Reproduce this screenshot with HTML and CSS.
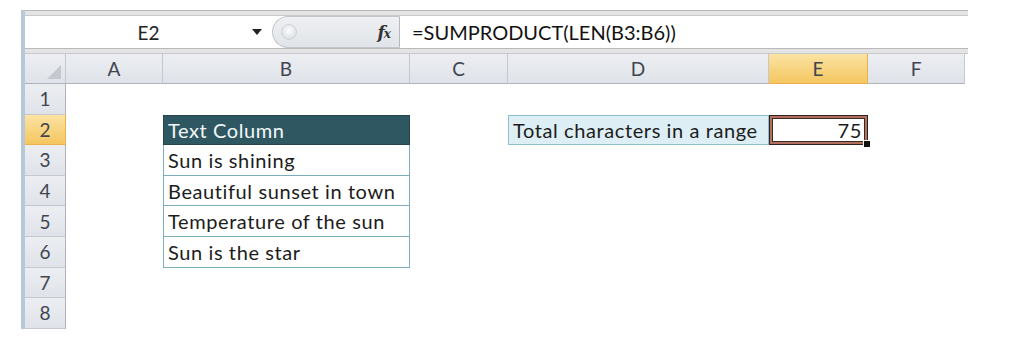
FILE: index.html
```html
<!DOCTYPE html>
<html lang="en">
<head>
    <meta charset="UTF-8">
    <title>SUMPRODUCT LEN example</title>
    <link rel="stylesheet" href="styles.css">
</head>
<body>

    <div class="sheet">
        <div class="bar-edge"></div>

        <div class="formula-bar">
            <div class="name-box">
                <span class="name">E2</span>
                <span class="drop"></span>
            </div>
            <div class="grip">
                <span class="knob"></span>
                <span class="fx"><i>f</i><sub>x</sub></span>
            </div>
            <div class="formula">=SUMPRODUCT(LEN(B3:B6))</div>
        </div>

        <div class="bar-edge"></div>

        <div class="grid">
            <div class="hd corner"></div>
            <div class="hd col">A</div>
            <div class="hd col">B</div>
            <div class="hd col">C</div>
            <div class="hd col">D</div>
            <div class="hd col active">E</div>
            <div class="hd col">F</div>

            <div class="hd row">1</div>

            <div class="hd row active">2</div>
            <div class="cell colB tbl tbl-head">Text Column</div>
            <div class="cell colD label">Total characters in a range</div>
            <div class="cell colE selected">75<span class="handle"></span></div>

            <div class="hd row">3</div>
            <div class="cell colB tbl">Sun is shining</div>

            <div class="hd row">4</div>
            <div class="cell colB tbl">Beautiful sunset in town</div>

            <div class="hd row">5</div>
            <div class="cell colB tbl">Temperature of the sun</div>

            <div class="hd row">6</div>
            <div class="cell colB tbl">Sun is the star</div>

            <div class="hd row">7</div>
            <div class="hd row">8</div>
        </div>
    </div>

</body>
</html>
```

FILE: styles.css
```css
body {
    margin: 0;
    background: #ffffff;
    font-family: 'Lato', 'Open Sans', sans-serif;
}

.sheet {
    width: 943px;
    margin: 10px 0 0 21px;
    border-left: 4px solid #b9c8d9;
}

/* thin grey strips above and below the formula bar */
.bar-edge {
    height: 4px;
    background: #e4e4e4;
    border-top: 1px solid #b9b9b9;
    border-bottom: 1px solid #c9c9c9;
}

.formula-bar {
    display: flex;
    height: 32px;
    background: #ffffff;
}

.name-box {
    width: 247px;
    display: flex;
    align-items: center;
}

.name {
    flex-grow: 1;
    text-align: center;
    font-size: 19px;
    color: #222;
    padding-left: 20px;
}

.drop {
    width: 0;
    height: 0;
    border-left: 5px solid transparent;
    border-right: 5px solid transparent;
    border-top: 6px solid #222;
    margin-right: 10px;
}

.grip {
    width: 128px;
    display: flex;
    align-items: center;
    justify-content: space-between;
    background: linear-gradient(#eef0f3, #e1e4e8);
    border: 1px solid #c3c7cd;
    border-right: 1px solid #b5b9bf;
    border-radius: 16px 0 0 16px;
    box-sizing: border-box;
    padding: 0 8px 0 8px;
}

.knob {
    width: 14px;
    height: 14px;
    border-radius: 50%;
    background: radial-gradient(circle at 50% 40%, #ffffff, #d0d4da);
    border: 1px solid #cfd3d8;
}

.fx {
    font-family: 'DejaVu Serif', serif;
    font-style: italic;
    font-weight: bold;
    font-size: 16px;
    color: #333;
}

.fx i {
    font-size: 17px;
}

.fx sub {
    font-size: 12px;
    vertical-align: 0;
    margin-left: -1px;
}

.formula {
    flex-grow: 1;
    display: flex;
    align-items: center;
    padding-left: 12px;
    font-size: 20px;
    color: #111;
}

/* spreadsheet grid */
.grid {
    display: grid;
    grid-template-columns: 41px 97px 247px 98px 261px 99px 97px;
    grid-template-rows: 30px repeat(8, 30.6px);
    font-size: 20px;
    letter-spacing: 0.6px;
    color: #1c1c1c;
}

.hd {
    background: linear-gradient(#eceef2, #dfe3e9);
    color: #404550;
    font-size: 19px;
    letter-spacing: 0;
    display: flex;
    align-items: center;
    justify-content: center;
    box-sizing: border-box;
}

.hd.col,
.hd.corner {
    border-right: 1px solid #c4c9d0;
    border-bottom: 1px solid #aeb4bc;
}

.hd.row {
    grid-column: 1;
    border-right: 1px solid #aeb4bc;
    border-bottom: 1px solid #c4c9d0;
}

.hd.active {
    background: linear-gradient(#fbe3a2, #f4c660);
    border-color: #eeb04a;
}

.corner {
    position: relative;
}

.corner::after {
    content: '';
    position: absolute;
    right: 4px;
    bottom: 4px;
    width: 0;
    height: 0;
    border-left: 14px solid transparent;
    border-bottom: 14px solid #c5c9cf;
}

.cell {
    display: flex;
    align-items: center;
    box-sizing: border-box;
    padding: 0 4px;
    white-space: nowrap;
}

.colB { grid-column: 3; }
.colD { grid-column: 5; }
.colE { grid-column: 6; }

.tbl {
    border-left: 1px solid #7eaebd;
    border-right: 1px solid #7eaebd;
    border-bottom: 1px solid #7eaebd;
}

.tbl-head {
    background: #2f5762;
    color: #f4f7f8;
    border: 1px solid #25444d;
}

.label {
    background: #ddeef4;
    border: 1px solid #8dbfcd;
}

.selected {
    justify-content: flex-end;
    padding-right: 5px;
    position: relative;
    border: 1px solid #2e221f;
    box-shadow: inset 0 0 0 2px #b4705f, inset 0 0 0 3px #3a2925;
}

.handle {
    position: absolute;
    right: -4px;
    bottom: -4px;
    width: 6px;
    height: 6px;
    background: #111;
    border: 1px solid #ffffff;
}
```
